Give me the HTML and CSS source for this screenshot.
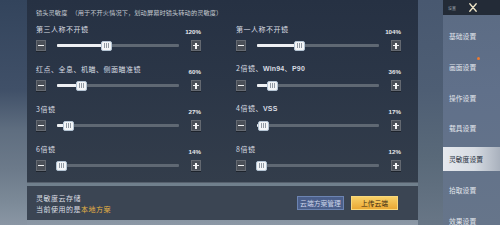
FILE: index.html
```html
<!DOCTYPE html>
<html lang="zh">
<head>
<meta charset="utf-8">
<link rel="stylesheet" href="styles.css">
</head>
<body>
<div class="screen">
  <div class="edge"></div>
  <main class="main">
    <section class="panel">
      <div class="title">镜头灵敏度<span class="sub">（用于不开火情况下，划动屏幕时镜头转动的灵敏度）</span></div>
      <div class="grid">
        <div class="item">
          <div class="label-row"><span class="label">第三人称不开镜</span><span class="pct">120%</span></div>
          <div class="ctrl">
            <span class="btn minus"></span>
            <div class="track"><div class="fill" style="width:49px"></div><div class="thumb" style="left:44px"><i></i><i></i><i></i></div></div>
            <span class="btn plus"></span>
          </div>
        </div>
        <div class="item">
          <div class="label-row"><span class="label">第一人称不开镜</span><span class="pct">104%</span></div>
          <div class="ctrl">
            <span class="btn minus"></span>
            <div class="track"><div class="fill" style="width:42px"></div><div class="thumb" style="left:37px"><i></i><i></i><i></i></div></div>
            <span class="btn plus"></span>
          </div>
        </div>
        <div class="item">
          <div class="label-row"><span class="label">红点、全息、机瞄、侧面瞄准镜</span><span class="pct">60%</span></div>
          <div class="ctrl">
            <span class="btn minus"></span>
            <div class="track"><div class="fill" style="width:24px"></div><div class="thumb" style="left:19px"><i></i><i></i><i></i></div></div>
            <span class="btn plus"></span>
          </div>
        </div>
        <div class="item">
          <div class="label-row"><span class="label">2倍镜、<b>Win94</b>、<b>P90</b></span><span class="pct">36%</span></div>
          <div class="ctrl">
            <span class="btn minus"></span>
            <div class="track"><div class="fill" style="width:15px"></div><div class="thumb" style="left:10px"><i></i><i></i><i></i></div></div>
            <span class="btn plus"></span>
          </div>
        </div>
        <div class="item">
          <div class="label-row"><span class="label">3倍镜</span><span class="pct">27%</span></div>
          <div class="ctrl">
            <span class="btn minus"></span>
            <div class="track"><div class="fill" style="width:11px"></div><div class="thumb" style="left:6px"><i></i><i></i><i></i></div></div>
            <span class="btn plus"></span>
          </div>
        </div>
        <div class="item">
          <div class="label-row"><span class="label">4倍镜、<b>VSS</b></span><span class="pct">17%</span></div>
          <div class="ctrl">
            <span class="btn minus"></span>
            <div class="track"><div class="fill" style="width:6px"></div><div class="thumb" style="left:1px"><i></i><i></i><i></i></div></div>
            <span class="btn plus"></span>
          </div>
        </div>
        <div class="item">
          <div class="label-row"><span class="label">6倍镜</span><span class="pct">14%</span></div>
          <div class="ctrl">
            <span class="btn minus"></span>
            <div class="track"><div class="fill" style="width:4px"></div><div class="thumb" style="left:-1px"><i></i><i></i><i></i></div></div>
            <span class="btn plus"></span>
          </div>
        </div>
        <div class="item">
          <div class="label-row"><span class="label">8倍镜</span><span class="pct">12%</span></div>
          <div class="ctrl">
            <span class="btn minus"></span>
            <div class="track"><div class="fill" style="width:4px"></div><div class="thumb" style="left:-1px"><i></i><i></i><i></i></div></div>
            <span class="btn plus"></span>
          </div>
        </div>
      </div>
    </section>
    <section class="cloud">
      <div class="cloud-text">
        <div class="cloud-line">灵敏度云存储</div>
        <div class="cloud-line">当前使用的是<span class="hl">本地方案</span></div>
      </div>
      <div class="actions">
        <span class="cbtn blue">云端方案管理</span>
        <span class="cbtn gold">上传云端</span>
      </div>
    </section>
  </main>
  <div class="gap"></div>
  <aside class="side">
    <div class="side-head">
      <span class="head-text">设置</span>
      <svg class="close" width="8" height="9" viewBox="0 0 8 9"><path d="M0.8 0.8 L7.2 8.2 M7.2 0.8 L0.8 8.2" stroke="#efe6c9" stroke-width="1.3" fill="none" stroke-linecap="round"/></svg>
    </div>
    <nav class="nav">
      <div class="nav-item">基础设置</div>
      <div class="nav-item">画面设置<span class="dot"></span></div>
      <div class="nav-item">操作设置</div>
      <div class="nav-item">载具设置</div>
      <div class="nav-item active">灵敏度设置</div>
      <div class="nav-item">拾取设置</div>
      <div class="nav-item">效果设置</div>
    </nav>
  </aside>
</div>
</body>
</html>
```

FILE: styles.css
```css
* { box-sizing: border-box; margin: 0; padding: 0; }
html, body { width: 500px; height: 225px; overflow: hidden; }
body {
  font-family: "Noto Sans CJK SC", "Noto Sans", sans-serif;
  background: linear-gradient(180deg, #34445c 0%, #3f4f66 35%, #56667a 60%, #74838f 85%, #8c98a6 100%);
  color: #d6dae0;
}
.screen { display: flex; width: 500px; height: 225px; }
.edge {
  width: 27px; flex: none;
  background: linear-gradient(180deg, #33445c 0%, #405068 40%, #5f6e80 58%, #6c7a8a 75%, #7c8a98 90%, #8a96a4 100%);
}
.main { width: 391px; flex: none; display: flex; flex-direction: column; gap: 3px; }
.panel {
  height: 183px;
  background: linear-gradient(180deg, #263143 0%, #2b3647 45%, #333d4b 100%);
  padding: 8px 0 0 9px;
  border-bottom: 1px solid #56606d;
}
.title { font-size: 6.2px; line-height: 10px; color: #c4c9d0; white-space: nowrap; letter-spacing: 0.1px; }
.title .sub { margin-left: 4px; }
.grid {
  margin-top: 6px;
  display: grid;
  grid-template-columns: 165px 165px;
  column-gap: 35px;
  row-gap: 13px;
}
.label-row { height: 10px; display: flex; justify-content: space-between; align-items: flex-end; }
.label { font-size: 7px; line-height: 10px; letter-spacing: 0.5px; color: #d8dce2; white-space: nowrap; }
.label b { font-family: "Liberation Sans", Arial, sans-serif; font-weight: bold; letter-spacing: 0.2px; }
.pct {
  font-family: "Liberation Sans", Arial, sans-serif;
  font-size: 6.2px; line-height: 6px; font-weight: bold; color: #e6e8ec;
  margin-bottom: -1px;
}
.ctrl { margin-top: 6px; height: 11px; display: flex; align-items: center; }
.btn {
  width: 10px; height: 11px; flex: none; position: relative;
  background: #4a4f57;
  border: 1px solid #646971;
  box-shadow: 0 1px 0 #1d232c;
}
.btn::before {
  content: ""; position: absolute; left: 50%; top: 50%;
  width: 6px; height: 1.2px; margin: -0.6px 0 0 -3px;
  background: #f2f3f5;
}
.plus::after {
  content: ""; position: absolute; left: 50%; top: 50%;
  width: 1.2px; height: 6px; margin: -3px 0 0 -0.6px;
  background: #f2f3f5;
}
.track {
  flex: none; width: 122px; height: 3px;
  margin: 0 12px 0 11px;
  background: #5f6873;
  position: relative; border-radius: 1px;
}
.fill { height: 100%; background: #eef0f3; border-radius: 1px; }
.thumb {
  position: absolute; top: 50%;
  width: 11px; height: 10px; margin-top: -5px;
  background: #f3f5f7;
  border: 1px solid #b4c4d4; border-radius: 2px;
  display: flex; justify-content: center; align-items: center; gap: 1px;
}
.thumb i { width: 1px; height: 5px; background: #9098a2; }

.cloud {
  height: 34px;
  background: #3b4553;
  display: flex; align-items: center; justify-content: space-between;
  padding: 2px 20px 0 9px;
}
.cloud-text { display: flex; flex-direction: column; }
.cloud-line { font-size: 7px; line-height: 11px; letter-spacing: 0.5px; color: #dadde3; white-space: nowrap; }
.hl { color: #e8b444; }
.actions { display: flex; gap: 7px; margin-top: -2px; }
.cbtn {
  width: 47px; height: 14px;
  font-size: 6.8px; line-height: 12px; text-align: center; white-space: nowrap;
}
.cbtn.blue { background: #4b5f8a; border: 1px solid #6c84b2; color: #cdd6ea; }
.cbtn.gold { background: linear-gradient(180deg, #f8d067, #eaa935); border: 1px solid #f8d87c; color: #3b2a12; }

.gap {
  width: 25px; flex: none;
  background: linear-gradient(180deg, #485870 0%, #4e5e74 40%, #596979 70%, #687686 100%);
}
.side {
  width: 57px; flex: none;
  background: linear-gradient(180deg, #5b6b83 0%, #60708a 40%, #66758a 100%);
  display: flex; flex-direction: column;
}
.side-head {
  height: 15px; flex: none;
  background: #232b37;
  display: flex; align-items: center; padding-left: 5px; gap: 13px;
}
.head-text { font-size: 4px; line-height: 6px; color: #9ba3ad; }
.close { display: block; }
.nav { padding-top: 9px; display: flex; flex-direction: column; gap: 6.8px; }
.nav-item {
  height: 24px; line-height: 24px; padding-left: 6px;
  font-size: 6.8px; color: #e2e6ec; position: relative; white-space: nowrap;
}
.nav-item.active {
  background: linear-gradient(90deg, #e6e9ee 0%, #d6dbe2 55%, #a9b1bd 100%);
  color: #263040;
}
.dot {
  position: absolute; left: 34px; top: 2px;
  width: 3px; height: 3px; border-radius: 50%;
  background: #ee7a30;
}
```
